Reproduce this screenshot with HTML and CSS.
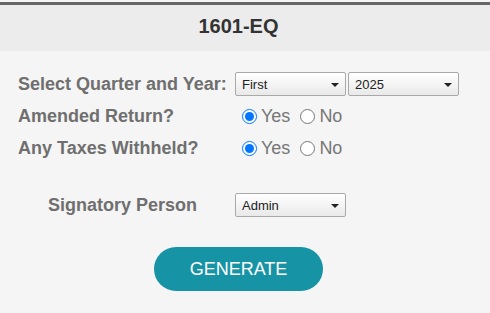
FILE: index.html
```html
<!DOCTYPE html>
<html>
<head>
<meta charset="utf-8">
<link rel="stylesheet" href="styles.css">
</head>
<body>
<div class="page">
  <div class="header"><h1 class="title">1601-EQ</h1></div>
  <form class="form">
    <div class="row row-first">
      <label class="label">Select Quarter and Year:</label>
      <div class="controls">
        <div class="select"><span>First</span><i class="arrow"></i></div>
        <div class="select select-gap"><span>2025</span><i class="arrow"></i></div>
      </div>
    </div>
    <div class="row">
      <label class="label">Amended Return?</label>
      <div class="controls radios">
        <input type="radio" name="amend" class="radio" checked><span class="opt">Yes</span>
        <input type="radio" name="amend" class="radio radio-no"><span class="opt">No</span>
      </div>
    </div>
    <div class="row row-third">
      <label class="label">Any Taxes Withheld?</label>
      <div class="controls radios">
        <input type="radio" name="tax" class="radio" checked><span class="opt">Yes</span>
        <input type="radio" name="tax" class="radio radio-no"><span class="opt">No</span>
      </div>
    </div>
    <div class="row row-sign">
      <label class="label label-indent">Signatory Person</label>
      <div class="controls">
        <div class="select"><span>Admin</span><i class="arrow"></i></div>
      </div>
    </div>
    <div class="actions">
      <button type="button" class="btn">GENERATE</button>
    </div>
  </form>
</div>
</body>
</html>
```
FILE: styles.css
```css
* { box-sizing: border-box; }
html, body { margin: 0; padding: 0; }
body {
  background: #f5f5f5;
  font-family: "Liberation Sans", Arial, sans-serif;
  width: 490px;
  height: 313px;
  overflow: hidden;
}
.page {
  padding-top: 2px;
  background: #f5f5f5;
}
.header {
  border-top: 3px solid #666;
  background: #ececec;
  height: 49px;
  display: flex;
  align-items: center;
  justify-content: center;
  padding-right: 13px;
}
.title {
  margin: 0;
  font-size: 20px;
  font-weight: bold;
  color: #333;
  padding-bottom: 4px;
}
.form {
  padding-left: 18px;
  padding-top: 17px;
}
.row {
  display: flex;
  align-items: center;
  height: 32px;
}
.row-third { height: 33px; }
.row-sign { margin-top: 24px; }
.label {
  width: 217px;
  font-size: 18px;
  font-weight: bold;
  color: #6f6f6f;
}
.label-indent { padding-left: 30px; }
.controls {
  display: flex;
  align-items: center;
}
.select {
  position: relative;
  width: 111px;
  height: 24px;
  border: 1px solid #a9a9a9;
  border-radius: 2px;
  background: linear-gradient(#ffffff, #e9e9e9);
  font-family: "Liberation Sans", Arial, sans-serif;
  font-size: 13px;
  color: #222;
  display: flex;
  align-items: center;
  padding-left: 6px;
  padding-top: 1px;
}
.select-gap { margin-left: 2px; }
.arrow {
  position: absolute;
  right: 6px;
  top: 10px;
  width: 0;
  height: 0;
  border-left: 4px solid transparent;
  border-right: 4px solid transparent;
  border-top: 4px solid #222;
}
.radios { padding-left: 7px; }
.radio {
  margin: 0;
  width: 15px;
  height: 15px;
  accent-color: #0075ff;
}
.opt {
  font-size: 18px;
  color: #777;
  margin-left: 4px;
}
.radio-no { margin-left: 10px; }
.actions {
  margin-top: 26px;
  padding-left: 136px;
}
.btn {
  width: 169px;
  height: 44px;
  border: none;
  border-radius: 22px;
  background: #1793a6;
  color: #fff;
  font-family: "Liberation Sans", Arial, sans-serif;
  font-size: 18px;
  padding: 0;
  cursor: pointer;
}
```
